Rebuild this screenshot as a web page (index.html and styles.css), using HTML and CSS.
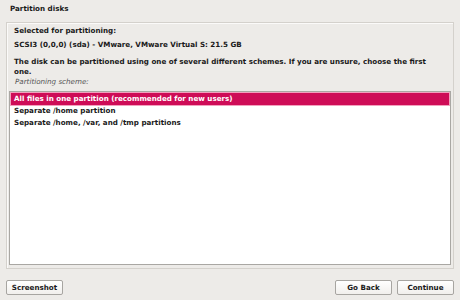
FILE: index.html
```html
<!DOCTYPE html>
<html lang="en">
  <head>
    <meta charset="UTF-8" />
    <title>Partition disks</title>
    <link rel="stylesheet" href="styles.css">
  </head>
  <body>
    <header class="titel">Partition disks</header>

    <section class="ramme">
      <p class="linje">Selected for partitioning:</p>
      <p class="linje disk">SCSI3 (0,0,0) (sda) - VMware, VMware Virtual S: 21.5 GB</p>
      <p class="linje forklaring">The disk can be partitioned using one of several different schemes. If you are unsure, choose the first one.</p>
      <p class="skema">Partitioning scheme:</p>

      <ul class="liste">
        <li class="valgt">All files in one partition (recommended for new users)</li>
        <li>Separate /home partition</li>
        <li>Separate /home, /var, and /tmp partitions</li>
      </ul>
    </section>

    <footer class="knapper">
      <button>Screenshot</button>
      <div class="hoejre">
        <button>Go Back</button>
        <button>Continue</button>
      </div>
    </footer>
  </body>
</html>
```

FILE: styles.css
```css
body {
  margin: 0;
  background-color: #edebe8;
  font-family: "DejaVu Sans", sans-serif;
  font-size: 7.15px;
  font-weight: bold;
  color: #1a1a1a;
}

.titel {
  height: 22px;
  line-height: 18px;
  padding-left: 10px;
}

.ramme {
  margin: 0 6px;
  height: 242px;
  border: 1px solid #d4d1cc;
  box-shadow: inset 1px 1px 0 #fbfaf9;
  padding: 3px 2px 0 2px;
}

p {
  margin: 0;
}

.linje {
  line-height: 10px;
  padding-left: 5px;
}

.disk {
  margin-top: 4px;
}

.forklaring {
  margin-top: 7px;
  padding-right: 12px;
}

.skema {
  line-height: 10px;
  padding-left: 6px;
  font-weight: normal;
  font-style: italic;
  color: #555;
}

.liste {
  list-style: none;
  margin: 4px 0 0 0;
  padding: 1px;
  height: 170px;
  background-color: white;
  border: 1px solid #a9a7a3;
}

.liste li {
  height: 12px;
  line-height: 12px;
  padding-left: 3px;
}

.valgt {
  background-color: #ce0c57;
  color: white;
  box-shadow: 0 0 0 1px #f2a0bd;
}

.knapper {
  display: flex;
  justify-content: space-between;
  margin: 11px 6px 0 6px;
}

.hoejre {
  display: flex;
  gap: 5px;
}

button {
  font-family: "DejaVu Sans", sans-serif;
  font-size: 7.15px;
  font-weight: bold;
  color: #1a1a1a;
  height: 15px;
  padding: 0;
  width: 57px;
  border: 1px solid #a7a5a1;
  border-radius: 2px;
  background: linear-gradient(#ffffff, #f1efec);
}
```
